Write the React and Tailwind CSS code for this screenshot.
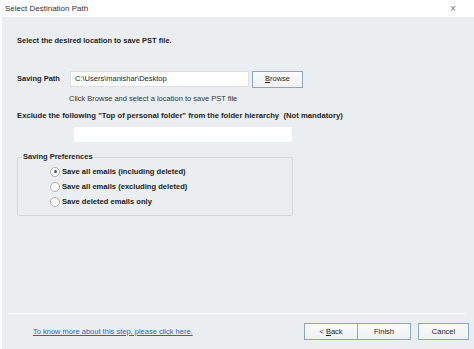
import React from 'react';

function Radio({ checked, label }) {
    return (
        <label className="flex items-center h-[15px] gap-[2px]">
            <span className="w-[10px] h-[10px] rounded-full border border-[#a9aeb4] bg-white flex items-center justify-center">
                {checked && <span className="w-[3px] h-[3px] rounded-full bg-[#555]" />}
            </span>
            <span className="font-bold text-[7.6px] text-[#222]">{label}</span>
        </label>
    );
}

function Btn({ children, className = '' }) {
    return (
        <button className={`h-[17px] border border-[#8ea6c6] bg-gradient-to-b from-[#fbfbfb] to-[#eef0f2] text-[7.5px] text-[#1e1e1e] ${className}`}>
            {children}
        </button>
    );
}

export default function App() {
    return (
        <div className="w-[474px] h-[349px] flex flex-col bg-white text-[#1e1e1e] font-['Liberation_Sans',sans-serif]">
            {/* Title bar */}
            <div className="h-[17px] flex items-center justify-between pl-[5px] pr-[18px] text-[8px] text-[#333]">
                <span>Select Destination Path</span>
                <span className="text-[10px] text-[#777]">×</span>
            </div>

            {/* Body */}
            <div className="flex-1 flex flex-col bg-[#ebeef0] ml-[2px] pl-[15px]">
                <div className="mt-[19px] h-[10px] leading-[10px] font-bold text-[7.5px]">
                    Select the desired location to save PST file.
                </div>

                <div className="mt-[25px] flex items-center h-[16px]">
                    <span className="w-[53px] font-bold text-[7.5px]">Saving Path</span>
                    <div className="w-[179px] h-[16px] bg-white border border-[#dcdfe3] flex items-center pl-[4px] text-[7.5px]">
                        C:\Users\manishar\Desktop
                    </div>
                    <Btn className="ml-[3px] w-[51px] h-[16px]"><u>B</u>rowse</Btn>
                </div>

                <div className="mt-[7px] h-[10px] leading-[10px] pl-[52px] text-[7.5px] text-[#333]">
                    Click Browse and select a location to save PST file
                </div>

                <div className="mt-[7px] h-[10px] leading-[10px] font-bold text-[7.7px]">
                    Exclude the following "Top of personal folder" from the folder hierarchy&nbsp; (Not mandatory)
                </div>

                <div className="mt-[6px] ml-[57px] w-[218px] h-[15px] bg-white" />

                <fieldset className="mt-[10px] w-[276px] h-[64px] border border-[#d4d8dc] rounded-[2px]">
                    <legend className="ml-[4px] px-[1px] font-bold text-[7.5px] leading-[10px]">Saving Preferences</legend>
                    <div className="mt-[2px] pl-[32px] flex flex-col">
                        <Radio checked label="Save all emails (including deleted)" />
                        <Radio label="Save all emails (excluding deleted)" />
                        <Radio label="Save deleted emails only" />
                    </div>
                </fieldset>

                <div className="flex-1" />

                <div className="mr-[9px] -ml-[9px] h-px bg-white" />

                <div className="h-[35px] flex items-center pr-[5px]">
                    <a className="ml-[16px] text-[7.5px] text-[#3b5fae] underline">
                        To know more about this step, please click here.
                    </a>
                    <div className="flex-1" />
                    <div className="flex">
                        <Btn className="w-[54px]">&lt; <u>B</u>ack</Btn>
                        <Btn className="w-[53px] border-l-0">Finish</Btn>
                    </div>
                    <Btn className="ml-[7px] w-[51px]">Cancel</Btn>
                </div>
            </div>
        </div>
    );
}
